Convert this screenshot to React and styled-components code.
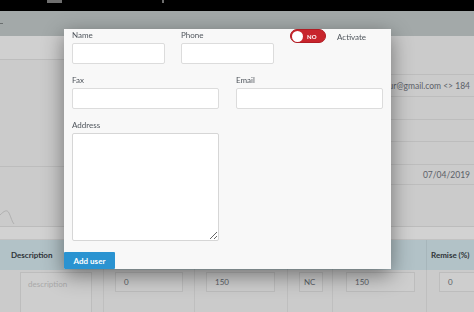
import React from "react";
import styled, { createGlobalStyle } from "styled-components";

const GlobalStyle = createGlobalStyle`
  html, body {
    margin: 0;
    padding: 0;
    background: #cbcbcb;
    font-family: Lato, "Open Sans", Arial, sans-serif;
  }
  #root {
    height: 312px;
    overflow: hidden;
  }
  * {
    box-sizing: border-box;
  }
`;

const Page = styled.div`
  width: 474px;
  display: flex;
  flex-direction: column;
  background: #cbcbcb;
  & > * {
    flex-shrink: 0;
  }
`;

const TopBar = styled.div`
  height: 11px;
  background: #000;
  display: flex;
  align-items: flex-start;
  gap: 100px;
  padding-left: 47px;
`;

const TopMark = styled.div`
  width: ${(p) => p.w}px;
  height: 3px;
  background: #6f6f6f;
`;

const NavBar = styled.div`
  height: 25px;
  background: #a3a9a9;
  display: flex;
  align-items: center;
`;

const NavDash = styled.div`
  width: 3px;
  height: 1px;
  background: #6a6f6f;
`;

const InfoGrid = styled.div`
  display: grid;
  grid-template-columns: 230px 1fr;
  height: 191px;
  border-bottom: 1px solid #bcbcbc;
`;

const InfoColumn = styled.div`
  display: flex;
  flex-direction: column;
  & > * {
    flex-shrink: 0;
  }
`;

const InfoRow = styled.div`
  height: ${(p) => p.h}px;
  border-bottom: ${(p) => (p.last ? "none" : "1px solid #bdbdbd")};
  background: ${(p) => p.bg || "transparent"};
  display: flex;
  align-items: center;
  justify-content: flex-end;
  padding-right: 4px;
  font-size: 8.5px;
  color: #5b6068;
  white-space: nowrap;
  overflow: hidden;
  position: relative;
`;

const Strip = styled.div`
  height: 13px;
  background: #d2d2d2;
  border-bottom: 1px solid #c2c2c2;
`;

const TableHeader = styled.div`
  display: grid;
  grid-template-columns: 104px 91px 93px 45px 94px 1fr;
  height: 30px;
  background: #b2c2c7;
`;

const HeadCell = styled.div`
  display: flex;
  align-items: center;
  padding-left: ${(p) => p.pl || 4}px;
  font-size: 8px;
  font-weight: 700;
  color: #2e3338;
  border-right: ${(p) => (p.last ? "none" : "1px solid #a7b6bb")};
  white-space: nowrap;
`;

const TableRow = styled.div`
  display: grid;
  grid-template-columns: 104px 91px 93px 45px 94px 1fr;
  height: 70px;
`;

const BodyCell = styled.div`
  padding: 2px 0 0 ${(p) => p.pl || 11}px;
  border-right: ${(p) => (p.last ? "none" : "1px solid #bfbfbf")};
`;

const CellInput = styled.div`
  width: ${(p) => p.w}px;
  height: 20px;
  border: 1px solid #bdbdbd;
  background: #cecece;
  font-size: 8px;
  color: #5a5f66;
  display: flex;
  align-items: center;
  padding-left: ${(p) => p.pl || 8}px;
`;

const CellArea = styled.div`
  width: 72px;
  height: 60px;
  border: 1px solid #bdbdbd;
  background: #cecece;
  font-size: 8px;
  color: #a9a9a9;
  padding: 6px 0 0 7px;
`;

const Modal = styled.div`
  position: fixed;
  top: 29px;
  left: 64px;
  width: 327px;
  height: 240px;
  background: #f8f8f8;
  box-shadow: 0 6px 20px rgba(0, 0, 0, 0.45);
  display: flex;
  flex-direction: column;
`;

const ModalBody = styled.div`
  flex: 1;
  padding: 0 8px;
  display: flex;
  flex-direction: column;
`;

const FirstRow = styled.div`
  display: flex;
  align-items: flex-start;
  gap: 16px;
`;

const FormRow = styled.div`
  display: flex;
  gap: 17px;
  margin-top: ${(p) => p.mt || 12}px;
`;

const Field = styled.div`
  display: flex;
  flex-direction: column;
  padding-top: ${(p) => p.pt || 0}px;
`;

const Label = styled.label`
  font-size: 8px;
  line-height: 9px;
  color: #4f555c;
  margin-bottom: 3px;
`;

const Input = styled.input`
  width: ${(p) => p.w}px;
  height: 21px;
  border: 1px solid #dcdcdc;
  border-radius: 2px;
  background: #fff;
  margin: 0;
  padding: 0 4px;
  outline: none;
`;

const TextArea = styled.textarea`
  width: 147px;
  height: 108px;
  border: 1px solid #d6d6d6;
  border-radius: 2px;
  background: #fff;
  margin: 0;
  padding: 4px;
  outline: none;
  display: block;
`;

const ToggleGroup = styled.div`
  display: flex;
  align-items: center;
  gap: 11px;
`;

const Toggle = styled.div`
  width: 36px;
  height: 14px;
  border-radius: 7px;
  background: #c8252c;
  border: 1px solid #b01d24;
  display: flex;
  align-items: center;
  padding-left: 1px;
  gap: 4px;
`;

const Knob = styled.div`
  width: 11px;
  height: 11px;
  border-radius: 50%;
  background: #fff;
`;

const ToggleText = styled.span`
  font-size: 6px;
  font-weight: 700;
  color: #fff;
  letter-spacing: 0.2px;
`;

const ToggleLabel = styled.span`
  font-size: 8px;
  color: #4f555c;
  padding-top: 2px;
`;

const Footer = styled.div`
  display: flex;
`;

const AddButton = styled.button`
  height: 17px;
  width: 51px;
  border: none;
  border-radius: 1px;
  background: #2a93d1;
  color: #fff;
  font-family: Lato, "Open Sans", Arial, sans-serif;
  font-size: 8px;
  font-weight: 700;
  padding: 0;
  cursor: pointer;
`;

const Curve = styled.svg`
  position: absolute;
  left: 0;
  bottom: 2px;
`;

export default function App() {
  const leftRows = [24, 107, 60];
  const rightRows = [
    { h: 39 },
    { h: 22, text: "contact.vendeur@gmail.com <> 184" },
    { h: 23 },
    { h: 22 },
    { h: 23 },
    { h: 20, text: "07/04/2019" },
    { h: 42 },
  ];

  return (
    <>
      <GlobalStyle />
      <Page>
        <TopBar>
          <TopMark w={15} />
          <TopMark w={2} />
        </TopBar>
        <NavBar>
          <NavDash />
        </NavBar>
        <InfoGrid>
          <InfoColumn>
            {leftRows.map((h, i) => (
              <InfoRow
                key={i}
                h={h}
                last={i === leftRows.length - 1}
                bg={i === 0 ? "#d0d0d0" : undefined}
              >
                {i === 2 && (
                  <Curve width="16" height="22" viewBox="0 0 16 22">
                    <path
                      d="M0 12 C4 8 7 6 9 10 C11 14 12 19 14 21"
                      fill="none"
                      stroke="#a9a9a9"
                      strokeWidth="0.8"
                    />
                  </Curve>
                )}
              </InfoRow>
            ))}
          </InfoColumn>
          <InfoColumn>
            {rightRows.map((r, i) => (
              <InfoRow key={i} h={r.h} last={i === rightRows.length - 1}>
                {r.text}
              </InfoRow>
            ))}
          </InfoColumn>
        </InfoGrid>
        <Strip />
        <TableHeader>
          <HeadCell pl={11}>Description</HeadCell>
          <HeadCell>Quantité</HeadCell>
          <HeadCell>Prix</HeadCell>
          <HeadCell>TVA</HeadCell>
          <HeadCell>Total</HeadCell>
          <HeadCell last>Remise (%)</HeadCell>
        </TableHeader>
        <TableRow>
          <BodyCell pl={20}>
            <CellArea>description</CellArea>
          </BodyCell>
          <BodyCell>
            <CellInput w={68}>0</CellInput>
          </BodyCell>
          <BodyCell>
            <CellInput w={69}>150</CellInput>
          </BodyCell>
          <BodyCell>
            <CellInput w={24} pl={4}>NC</CellInput>
          </BodyCell>
          <BodyCell pl={13}>
            <CellInput w={69}>150</CellInput>
          </BodyCell>
          <BodyCell last pl={12}>
            <CellInput w={40}>0</CellInput>
          </BodyCell>
        </TableRow>
      </Page>

      <Modal>
        <ModalBody>
          <FirstRow>
            <Field pt={2}>
              <Label>Name</Label>
              <Input w={93} />
            </Field>
            <Field pt={2}>
              <Label>Phone</Label>
              <Input w={93} />
            </Field>
            <ToggleGroup>
              <Toggle>
                <Knob />
                <ToggleText>NO</ToggleText>
              </Toggle>
              <ToggleLabel>Activate</ToggleLabel>
            </ToggleGroup>
          </FirstRow>
          <FormRow>
            <Field>
              <Label>Fax</Label>
              <Input w={147} />
            </Field>
            <Field>
              <Label>Email</Label>
              <Input w={147} />
            </Field>
          </FormRow>
          <FormRow>
            <Field>
              <Label>Address</Label>
              <TextArea />
            </Field>
          </FormRow>
        </ModalBody>
        <Footer>
          <AddButton>Add user</AddButton>
        </Footer>
      </Modal>
    </>
  );
}
